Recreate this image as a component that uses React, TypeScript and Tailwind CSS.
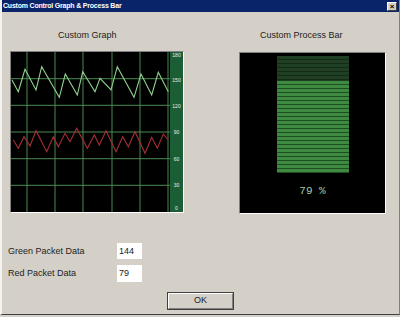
import React from "react";

const greenPts = "1,28 7.3,39.7 14,17.3 25,38 30.7,14.7 48.3,45.3 54.3,22 66.3,43 71.7,19.7 84,39.7 89,26.3 100,38 106.3,14.7 123,45.3 130,22 140.7,43 147.3,20.3 157.3,39.7";
const redPts = "2.3,88 7.3,96.3 13,84.7 19,94 25,78.7 35.7,99.7 42.3,84.7 47.3,94.7 54,81.3 59,89.7 65.7,76.3 76.3,96.3 83.3,83 88.3,93 95,78.7 105,99.7 111.7,84.7 117.3,94.7 124,79.7 134,101.3 140.7,85.3 146.3,96.3 152.3,82 157.3,88";

function Graph() {
  const vx = [16, 44, 72, 101, 129, 157];
  const hy = [26.7, 53.3, 80, 106.7, 133.3];
  const labels: [string, number][] = [
    ["180", 4],
    ["150", 29],
    ["120", 55],
    ["90", 81],
    ["60", 108],
    ["30", 134],
    ["0", 157],
  ];
  return (
    <div className="w-[174px] h-[162px] border border-t-[#808080] border-l-[#808080] border-b-white border-r-white">
      <svg width="172" height="160" viewBox="0 0 172 160" className="block">
        <rect x="0" y="0" width="159" height="160" fill="#000" />
        <rect x="159" y="0" width="13" height="160" fill="#1b5e36" />
        {vx.map((x) => (
          <line key={x} x1={x} y1={0} x2={x} y2={160} stroke="#4a8a50" strokeWidth="1" />
        ))}
        {hy.map((y) => (
          <line key={y} x1={0} y1={y} x2={159} y2={y} stroke="#4a8a50" strokeWidth="1" />
        ))}
        <polyline points={greenPts} fill="none" stroke="#8fd08f" strokeWidth="1.1" />
        <polyline points={redPts} fill="none" stroke="#a52f35" strokeWidth="1.1" />
        {labels.map(([t, y]) => (
          <text
            key={t}
            x="165.5"
            y={y}
            fill="#e8efe8"
            fontSize="5"
            textAnchor="middle"
            dominantBaseline="middle"
            fontFamily="Liberation Sans, sans-serif"
          >
            {t}
          </text>
        ))}
      </svg>
    </div>
  );
}

function ProcessBar() {
  return (
    <div className="w-[147px] h-[162px] border border-t-[#808080] border-l-[#808080] border-b-white border-r-white">
      <div className="w-[145px] h-[160px] bg-black flex flex-col items-center pt-[3px]">
        <div className="w-[72px] h-[117px] flex flex-col">
          <div className="h-[25px] bg-[repeating-linear-gradient(to_bottom,#1f3f22_0px,#1f3f22_3px,#142a16_3px,#142a16_4px)]" />
          <div className="h-[92px] bg-[repeating-linear-gradient(to_bottom,#3e8a40_0px,#3e8a40_3px,#1f4d22_3px,#1f4d22_4px)]" />
        </div>
        <div className="mt-[12px] text-[11px] leading-[12px] text-[#a3c8a3] font-['Liberation_Mono',monospace] whitespace-pre">
          79 %
        </div>
      </div>
    </div>
  );
}

export default function App() {
  return (
    <div className="w-[400px] h-[317px] bg-[#d4d0c8] font-['Liberation_Sans',Arial,sans-serif]">
      <div className="h-[315px] flex flex-col border-l-2 border-l-[#f4f2ee] border-b border-b-[#404040] border-r border-r-[#808080]">
        <div className="h-[12px] bg-[#0a246a] flex items-center justify-between pl-[1px] pr-[2px]">
          <span className="text-white font-bold text-[7px] leading-[10px] tracking-[-0.2px] font-['Liberation_Sans',Arial,sans-serif]">
            Custom Control Graph &amp; Process Bar
          </span>
          <div className="w-[10px] h-[9px] bg-[#d4d0c8] border border-t-white border-l-white border-b-[#404040] border-r-[#404040] flex items-center justify-center text-[8px] leading-[7px] font-bold text-black">
            ×
          </div>
        </div>
        <div className="flex mt-[18px]">
          <div className="ml-[8px] flex flex-col">
            <div className="pl-[48px] text-[9px] leading-[11px] text-[#222]">Custom Graph</div>
            <div className="mt-[10px]">
              <Graph />
            </div>
          </div>
          <div className="ml-[55px] flex flex-col">
            <div className="pl-[21px] text-[9px] leading-[11px] text-[#222]">Custom Process Bar</div>
            <div className="mt-[11px]">
              <ProcessBar />
            </div>
          </div>
        </div>
        <div className="mt-[29px] ml-[6px] flex flex-col gap-[6px]">
          <div className="flex items-center">
            <div className="w-[109px] text-[9px] leading-[11px] text-[#222]">Green Packet Data</div>
            <div className="w-[25px] h-[16px] bg-white text-[9px] leading-[16px] pl-[2px] text-[#222]">144</div>
          </div>
          <div className="flex items-center">
            <div className="w-[109px] text-[9px] leading-[11px] text-[#222]">Red Packet Data</div>
            <div className="w-[25px] h-[17px] bg-white text-[9px] leading-[17px] pl-[2px] text-[#222]">79</div>
          </div>
        </div>
        <div className="flex justify-center mt-[10px]">
          <div className="w-[67px] h-[18px] border border-[#404040] flex">
            <div className="flex-1 border border-t-white border-l-white border-b-[#808080] border-r-[#808080] flex items-center justify-center text-[9px] text-[#222]">
              OK
            </div>
          </div>
        </div>
      </div>
    </div>
  );
}
